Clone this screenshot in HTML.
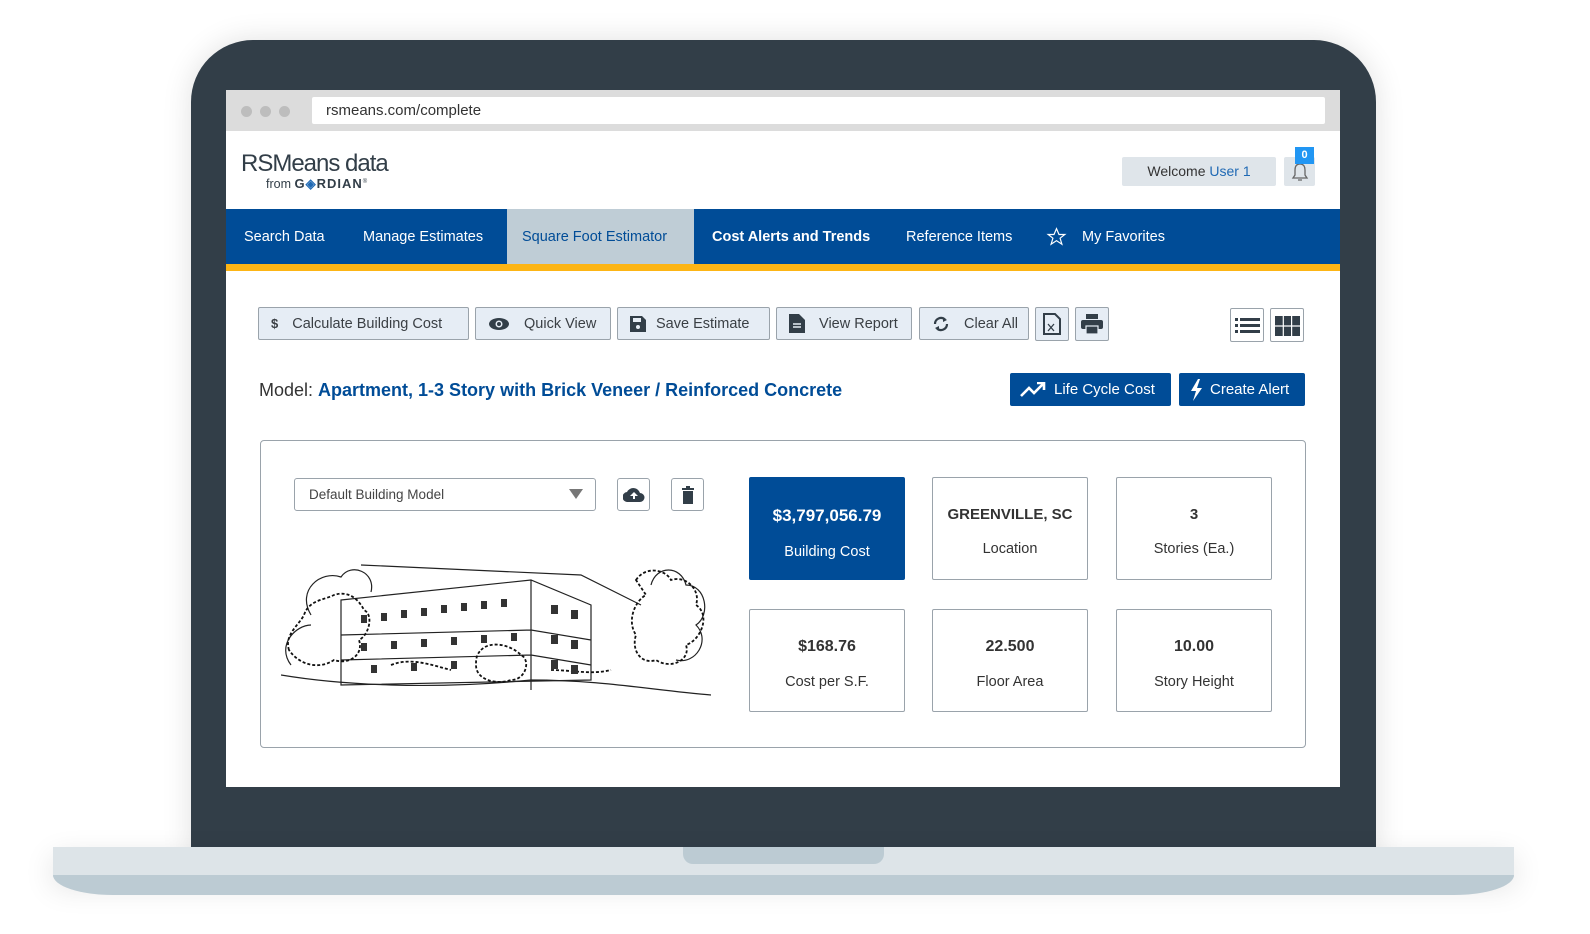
<!DOCTYPE html>
<html><head><meta charset="utf-8">
<style>
*{box-sizing:border-box;margin:0;padding:0}
body{width:1590px;height:934px;background:#fff;position:relative;overflow:hidden;font-family:"Liberation Sans",sans-serif;}
.a{position:absolute}
.frame{left:191px;top:40px;width:1185px;height:820px;background:#323e48;border-radius:62px 62px 0 0;box-shadow:0 0 30px rgba(0,0,0,.12)}
.screen{left:226px;top:90px;width:1114px;height:697px;background:#fff;overflow:hidden}
.btn{position:absolute;top:217px;height:33px;background:#e6edf5;border:1px solid #9aa3ab;border-radius:2px;font-size:14.5px;color:#3a3f44;display:flex;align-items:center;padding-left:12px;gap:10px}
.ib{position:absolute;top:217px;width:34px;height:34px;background:#e6edf5;border:1px solid #9aa3ab;border-radius:2px;display:flex;align-items:center;justify-content:center}
.card{position:absolute;width:156px;height:103px;border:1px solid #9aa3ab;border-radius:2px;text-align:center;color:#333}
.card b{display:block;margin-top:28px;font-size:16px}
.card span{display:block;margin-top:18px;font-size:14.5px}
.nav span{position:absolute;top:20px;color:#fff;font-size:14.5px}
</style></head><body>
<div class="a frame"></div>
<div class="a" style="left:53px;top:847px;width:1461px;height:30px;background:#dde4e8;box-shadow:0 10px 30px rgba(0,0,0,.12)"></div>
<div class="a" style="left:53px;top:875px;width:1461px;height:20px;background:#bccbd3;border-radius:0 0 60px 60px/0 0 20px 20px"></div>
<div class="a" style="left:683px;top:847px;width:201px;height:17px;background:#bccbd3;border-radius:0 0 10px 10px"></div>

<div class="a screen">
 <div class="a" style="left:0;top:0;width:1114px;height:41px;background:#dcdcdc"></div>
 <div class="a" style="left:15px;top:16px;width:11px;height:11px;border-radius:50%;background:#bdbdbd"></div>
 <div class="a" style="left:34px;top:16px;width:11px;height:11px;border-radius:50%;background:#bdbdbd"></div>
 <div class="a" style="left:53px;top:16px;width:11px;height:11px;border-radius:50%;background:#bdbdbd"></div>
 <div class="a" style="left:86px;top:7px;width:1013px;height:27px;background:#fff;border-radius:2px;font-size:15px;color:#333;padding:5px 14px">rsmeans.com/complete</div>

 <div class="a" style="left:15px;top:60px;font-size:24px;color:#323e48;letter-spacing:-1px">RSMeans data</div>
 <div class="a" style="left:40px;top:86px;font-size:12.5px;color:#323e48">from <b style="font-size:13px;letter-spacing:1px">G<span style="color:#1f69b4">◈</span>RDIAN</b><sup style="font-size:6px">®</sup></div>

 <div class="a" style="left:896px;top:67px;width:154px;height:29px;background:#dfe5ea;border-radius:2px;font-size:14px;color:#333;text-align:center;line-height:29px">Welcome <span style="color:#1f69b4">User 1</span></div>
 <div class="a" style="left:1058px;top:67px;width:31px;height:29px;background:#dfe5ea;border-radius:2px"></div>
 <svg class="a" style="left:1064px;top:72px" width="20" height="22" viewBox="0 0 20 22"><path d="M10 2c-4 0-5 3-5 6v5l-2 3h14l-2-3V8c0-3-1-6-5-6zM8 18h4" fill="none" stroke="#666" stroke-width="1.3"/></svg>
 <div class="a" style="left:1069px;top:57px;width:19px;height:17px;background:#2196f3;color:#fff;font-size:11px;font-weight:bold;text-align:center;line-height:17px">0</div>

 <div class="a nav" style="left:0;top:119px;width:1114px;height:55px;background:#004c97">
  <span style="left:18px">Search Data</span>
  <span style="left:137px">Manage Estimates</span>
  <div class="a" style="left:281px;top:0;width:187px;height:55px;background:#bfcdd6"></div>
  <span style="left:296px;color:#004c97">Square Foot Estimator</span>
  <span style="left:486px;font-weight:bold">Cost Alerts and Trends</span>
  <span style="left:680px">Reference Items</span>
  <svg class="a" style="left:820px;top:18px" width="21" height="20" viewBox="0 0 24 24"><path d="M12 2l3 7h7l-5.7 4.4 2.2 7.3L12 16.4 5.5 20.7l2.2-7.3L2 9h7z" fill="none" stroke="#fff" stroke-width="1.4"/></svg>
  <span style="left:856px">My Favorites</span>
 </div>
 <div class="a" style="left:0;top:174px;width:1114px;height:7px;background:#fdb515"></div>

 <div class="btn" style="left:32px;width:211px"><b style="font-size:13px">$</b>&nbsp;Calculate Building Cost</div>
 <div class="btn" style="left:249px;width:136px"><svg width="22" height="14" viewBox="0 0 22 14"><ellipse cx="11" cy="7" rx="10" ry="6" fill="#323e48"/><circle cx="11" cy="7" r="3.5" fill="#e6edf5"/><circle cx="11" cy="7" r="2" fill="#323e48"/></svg>&nbsp;Quick View</div>
 <div class="btn" style="left:391px;width:153px"><svg width="16" height="17" viewBox="0 0 16 17"><path d="M0 1h12l4 4v12H0z" fill="#323e48"/><rect x="3" y="3" width="8" height="4" fill="#e6edf5"/><circle cx="8" cy="12" r="2" fill="#e6edf5"/></svg>Save Estimate</div>
 <div class="btn" style="left:550px;width:136px"><svg width="16" height="19" viewBox="0 0 16 19"><path d="M0 0h10l6 6v13H0z" fill="#323e48"/><path d="M4 10h8M4 13h8" stroke="#e6edf5" stroke-width="1.5"/></svg>&nbsp;View Report</div>
 <div class="btn" style="left:693px;width:110px"><svg width="18" height="18" viewBox="0 0 18 18"><path d="M3 9a6 6 0 0 1 10-4.5M15 9a6 6 0 0 1-10 4.5" fill="none" stroke="#323e48" stroke-width="2.2"/><path d="M11 2l4 3-4 2zM7 16l-4-3 4-2z" fill="#323e48"/></svg>&nbsp;Clear All</div>
 <div class="ib" style="left:809px"><svg width="18" height="22" viewBox="0 0 18 22"><path d="M1 1h11l5 5v15H1z" fill="none" stroke="#323e48" stroke-width="2"/><path d="M5 11l6 7M11 11l-6 7" stroke="#323e48" stroke-width="1.3"/></svg></div>
 <div class="ib" style="left:849px"><svg width="22" height="20" viewBox="0 0 22 20"><rect x="5" y="0" width="12" height="5" fill="#323e48"/><rect x="0" y="6" width="22" height="9" rx="2" fill="#323e48"/><rect x="5" y="12" width="12" height="8" fill="#323e48" stroke="#e6edf5" stroke-width="1.2"/></svg></div>
 <div class="a" style="left:1004px;top:218px;width:34px;height:34px;border:1px solid #9aa3ab;border-radius:2px"><svg style="margin:9px 4px" width="25" height="15" viewBox="0 0 25 15"><rect x="0" y="0" width="3" height="3" fill="#323e48"/><rect x="5" y="0" width="20" height="3" fill="#323e48"/><rect x="0" y="6" width="3" height="3" fill="#323e48"/><rect x="5" y="6" width="20" height="3" fill="#323e48"/><rect x="0" y="12" width="3" height="3" fill="#323e48"/><rect x="5" y="12" width="20" height="3" fill="#323e48"/></svg></div>
 <div class="a" style="left:1044px;top:218px;width:34px;height:34px;border:1px solid #9aa3ab;border-radius:2px"><svg style="margin:7px 4px" width="25" height="20" viewBox="0 0 25 20"><rect width="25" height="20" fill="#323e48"/><path d="M8.3 0v20M16.6 0v20M0 10h25" stroke="#fff" stroke-width="1.2"/></svg></div>

 <div class="a" style="left:33px;top:290px;font-size:18px;color:#333">Model: <b style="color:#004c97">Apartment, 1-3 Story with Brick Veneer / Reinforced Concrete</b></div>
 <div class="a" style="left:784px;top:283px;width:161px;height:33px;background:#004c97;border-radius:2px;color:#fff;font-size:15px;line-height:33px;padding-left:44px">Life Cycle Cost</div>
 <svg class="a" style="left:794px;top:292px" width="26" height="16" viewBox="0 0 26 16"><path d="M1 14l8-8 5 5 9-9M17 1h7v7" fill="none" stroke="#fff" stroke-width="2.6"/></svg>
 <div class="a" style="left:953px;top:283px;width:126px;height:33px;background:#004c97;border-radius:2px;color:#fff;font-size:15px;line-height:33px;padding-left:31px">Create Alert</div>
 <svg class="a" style="left:963px;top:289px" width="14" height="22" viewBox="0 0 14 22"><path d="M9 0L2 12h5l-3 10 9-13H8l3-9z" fill="#fff"/></svg>

 <div class="a" style="left:34px;top:350px;width:1046px;height:308px;border:1px solid #9aa3ab;border-radius:4px"></div>
 <div class="a" style="left:68px;top:388px;width:302px;height:33px;border:1px solid #9aa3ab;border-radius:3px;font-size:13.5px;color:#444;padding:8px 14px">Default Building Model</div>
 <svg class="a" style="left:343px;top:399px" width="14" height="10"><path d="M0 0h14L7 10z" fill="#777"/></svg>
 <div class="a" style="left:391px;top:388px;width:33px;height:33px;border:1px solid #9aa3ab;border-radius:3px"><svg style="margin:8px 5px" width="22" height="15" viewBox="0 0 22 15"><path d="M5 15a5 5 0 0 1-1-10 7 7 0 0 1 13 1 4.5 4.5 0 0 1 0 9z" fill="#323e48"/><path d="M11 5l-4 4h3v3h2V9h3z" fill="#fff"/></svg></div>
 <div class="a" style="left:445px;top:388px;width:33px;height:33px;border:1px solid #9aa3ab;border-radius:3px"><svg style="margin:7px 10px" width="12" height="18" viewBox="0 0 12 18"><rect x="0" y="2" width="12" height="2" fill="#323e48"/><rect x="4" y="0" width="4" height="2" fill="#323e48"/><rect x="1" y="5" width="10" height="13" fill="#323e48"/></svg></div>

 <svg class="a" style="left:55px;top:465px" width="440" height="150" viewBox="0 0 440 150">
  <g fill="none" stroke="#222" stroke-width="1.2">
   <path d="M60 45l190-20 60 25 0 75-250 5z"/>
   <path d="M80 10l220 10 60 30M250 25l0 110M60 80l190-5 60 10M60 105l190-5 60 10"/>
   <path d="M0 120c60 10 150 15 250 5 70 0 120 10 180 15"/>
   <path d="M30 60c-15-25 10-45 30-38 10-15 35-5 30 15M10 110c-15-20 5-40 20-40M370 30c5-20 30-20 35 0 20 0 25 30 10 40 15 15 0 40-20 35"/>
  </g>
  <g fill="none" stroke="#111" stroke-width="1.8" stroke-dasharray="3 2">
   <path d="M8 95c-5-15 10-25 15-35 5-15 20-15 30-20 15-5 25 5 30 15 10 5 5 25-5 30 5 15-10 25-25 20-15 10-35 5-45-10z"/>
   <path d="M355 25c10-15 30-10 35 0 15-5 30 10 25 25 15 10 5 35-10 40 5 15-15 25-30 15-15 5-25-10-20-25-10-15 0-35 10-40z"/>
   <path d="M200 95c10-10 30-5 40 5 10 5 5 25-10 25-15 5-35 0-35-15 0-5 0-10 5-15z"/>
   <path d="M110 110c20-8 40 0 60 5M270 115c20 0 40 5 60 0"/>
  </g>
  <g fill="#333">
   <rect x="80" y="60" width="6" height="8"/><rect x="100" y="58" width="6" height="8"/><rect x="120" y="55" width="6" height="8"/><rect x="140" y="53" width="6" height="8"/><rect x="160" y="50" width="6" height="8"/><rect x="180" y="48" width="6" height="8"/><rect x="200" y="46" width="6" height="8"/><rect x="220" y="44" width="6" height="8"/>
   <rect x="80" y="88" width="6" height="8"/><rect x="110" y="86" width="6" height="8"/><rect x="140" y="84" width="6" height="8"/><rect x="170" y="82" width="6" height="8"/><rect x="200" y="80" width="6" height="8"/><rect x="230" y="78" width="6" height="8"/>
   <rect x="270" y="50" width="7" height="9"/><rect x="290" y="55" width="7" height="9"/><rect x="270" y="80" width="7" height="9"/><rect x="290" y="85" width="7" height="9"/><rect x="270" y="105" width="7" height="9"/><rect x="290" y="110" width="7" height="9"/>
   <rect x="90" y="110" width="6" height="8"/><rect x="130" y="108" width="6" height="8"/><rect x="170" y="106" width="6" height="8"/>
  </g>
 </svg>

 <div class="card" style="left:523px;top:387px;background:#004c97;border-color:#004c97;color:#fff"><b style="font-size:17px">$3,797,056.79</b><span>Building Cost</span></div>
 <div class="card" style="left:706px;top:387px"><b style="font-size:15px">GREENVILLE, SC</b><span>Location</span></div>
 <div class="card" style="left:890px;top:387px"><b style="font-size:15px">3</b><span>Stories (Ea.)</span></div>
 <div class="card" style="left:523px;top:519px"><b>$168.76</b><span>Cost per S.F.</span></div>
 <div class="card" style="left:706px;top:519px"><b>22.500</b><span>Floor Area</span></div>
 <div class="card" style="left:890px;top:519px"><b>10.00</b><span>Story Height</span></div>
</div>
</body></html>
